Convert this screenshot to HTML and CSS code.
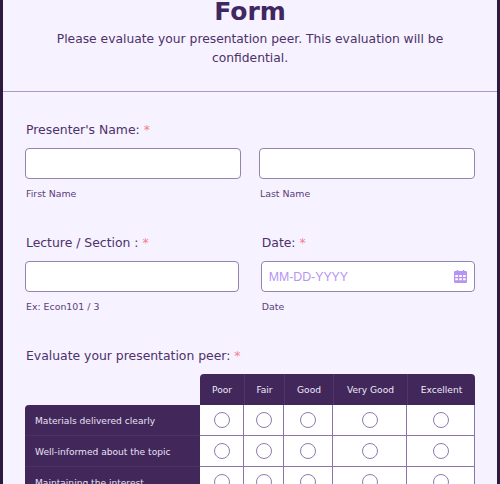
FILE: index.html
```html
<!DOCTYPE html>
<html>

<head>
    <meta charset="UTF-8">
    <meta name="viewport" content="width=device-width, initial-scale=1.0">
    <title>Peer Evaluation Form</title>
    <link rel="stylesheet" href="styles.css">
</head>

<body>
    <div class="form">
        <div class="form__header">
            <h1 class="form__title">Form</h1>
            <p class="form__description">Please evaluate your presentation peer. This evaluation will be confidential.</p>
        </div>

        <div class="form__body">
            <div class="field field--name">
                <div class="field__label">Presenter's Name: <span class="field__required">*</span></div>
                <div class="field__row field__row--name">
                    <div class="field__col">
                        <input type="text" class="input">
                        <div class="field__sublabel">First Name</div>
                    </div>
                    <div class="field__col">
                        <input type="text" class="input">
                        <div class="field__sublabel">Last Name</div>
                    </div>
                </div>
            </div>

            <div class="field__row field__row--split">
                <div class="field field--split">
                    <div class="field__label">Lecture / Section : <span class="field__required">*</span></div>
                    <input type="text" class="input">
                    <div class="field__sublabel">Ex: Econ101 / 3</div>
                </div>
                <div class="field field--split">
                    <div class="field__label">Date: <span class="field__required">*</span></div>
                    <div class="date">
                        <input type="text" class="input date__input" placeholder="MM-DD-YYYY">
                        <svg class="date__icon" viewBox="0 0 12 12" width="13" height="13">
                            <path fill="#b794f4" fill-rule="evenodd" d="M2.5 0h1.4v1h4.2V0h1.4v1H11a1 1 0 0 1 1 1v9a1 1 0 0 1-1 1H1a1 1 0 0 1-1-1V2a1 1 0 0 1 1-1h1.5zM1.2 4.6v1.8h2.4V4.6zm3.6 0v1.8h2.4V4.6zm3.6 0v1.8h2.4V4.6zM1.2 7.6v1.8h2.4V7.6zm3.6 0v1.8h2.4V7.6zm3.6 0v1.8h2.4V7.6z"/>
                        </svg>
                    </div>
                    <div class="field__sublabel">Date</div>
                </div>
            </div>

            <div class="field field--matrix">
                <div class="field__label">Evaluate your presentation peer: <span class="field__required">*</span></div>
                <table class="matrix">
                    <thead>
                        <tr>
                            <th class="matrix__corner"></th>
                            <th class="matrix__head matrix__col--poor">Poor</th>
                            <th class="matrix__head matrix__col--fair">Fair</th>
                            <th class="matrix__head matrix__col--good">Good</th>
                            <th class="matrix__head matrix__col--verygood">Very Good</th>
                            <th class="matrix__head matrix__col--excellent">Excellent</th>
                        </tr>
                    </thead>
                    <tbody>
                        <tr>
                            <th class="matrix__row">Materials delivered clearly</th>
                            <td class="matrix__cell"><span class="radio"></span></td>
                            <td class="matrix__cell"><span class="radio"></span></td>
                            <td class="matrix__cell"><span class="radio"></span></td>
                            <td class="matrix__cell"><span class="radio"></span></td>
                            <td class="matrix__cell"><span class="radio"></span></td>
                        </tr>
                        <tr>
                            <th class="matrix__row">Well-informed about the topic</th>
                            <td class="matrix__cell"><span class="radio"></span></td>
                            <td class="matrix__cell"><span class="radio"></span></td>
                            <td class="matrix__cell"><span class="radio"></span></td>
                            <td class="matrix__cell"><span class="radio"></span></td>
                            <td class="matrix__cell"><span class="radio"></span></td>
                        </tr>
                        <tr>
                            <th class="matrix__row">Maintaining the interest</th>
                            <td class="matrix__cell"><span class="radio"></span></td>
                            <td class="matrix__cell"><span class="radio"></span></td>
                            <td class="matrix__cell"><span class="radio"></span></td>
                            <td class="matrix__cell"><span class="radio"></span></td>
                            <td class="matrix__cell"><span class="radio"></span></td>
                        </tr>
                    </tbody>
                </table>
            </div>
        </div>
    </div>
</body>

</html>
```

FILE: styles.css
```css
*,
*::before,
*::after {
    box-sizing: border-box;
    margin: 0;
    padding: 0;
}

html,
body {
    height: 484px;
    overflow: hidden;
}

body {
    background-color: #2c1a3f;
    padding: 0 3px;
    font-family: "DejaVu Sans", Verdana, sans-serif;
    color: #4d3169;
}

.form {
    background-color: #f6f2ff;
    height: 100%;
}

.form__header {
    height: 92px;
    padding: 0 22px;
    text-align: center;
    border-bottom: 1px solid #a99bc9;
}

.form__title {
    font-size: 25px;
    line-height: 24px;
    font-weight: 700;
    color: #41275f;
}

.form__description {
    margin-top: 6px;
    font-size: 12.3px;
    line-height: 19px;
}

.form__body {
    padding: 29px 22px 0;
}

.field__label {
    padding-left: 1px;
    font-size: 12.4px;
    line-height: 18px;
    margin-bottom: 9px;
}

.field__required {
    color: #f2808a;
}

.field__row {
    display: flex;
}

.field__row--name {
    gap: 18px;
}

.field__row--split {
    gap: 21.5px;
    margin-top: 33px;
}

.field__col,
.field--split {
    flex: 1 1 0;
    min-width: 0;
}

.field__sublabel {
    margin-top: 8px;
    padding-left: 1px;
    font-size: 9.4px;
    line-height: 14px;
    color: #5a4078;
}

.input {
    display: block;
    width: 100%;
    height: 31px;
    border: 1px solid #9385ae;
    border-radius: 4px;
    background-color: white;
    outline: none;
}

.date {
    position: relative;
}

.date__input {
    padding: 0 7px;
    font-family: "Liberation Sans", Arial, sans-serif;
    font-size: 12.3px;
}

.date__input::placeholder {
    color: #b794f4;
    opacity: 1;
}

.date__icon {
    position: absolute;
    top: 9px;
    right: 8px;
}

.field--matrix {
    margin-top: 33px;
}

.matrix {
    width: 450px;
    border-collapse: separate;
    border-spacing: 0;
    table-layout: fixed;
    font-size: 9.1px;
}

.matrix__corner {
    width: 175px;
}

.matrix__head {
    height: 31px;
    font-weight: 400;
    color: #f0e9fb;
    background-color: #41275a;
    border-left: 1px solid #4f3569;
}

.matrix__head:nth-child(2) {
    border-left: none;
    border-top-left-radius: 4px;
}

.matrix__head:last-child {
    border-top-right-radius: 4px;
}

.matrix__col--poor {
    width: 44px;
}

.matrix__col--fair {
    width: 40px;
}

.matrix__col--good {
    width: 49px;
}

.matrix__col--verygood {
    width: 74px;
}

.matrix__col--excellent {
    width: 68px;
}

.matrix__row {
    height: 31px;
    padding-left: 10px;
    padding-top: 2px;
    font-weight: 400;
    text-align: left;
    white-space: nowrap;
    color: #e9e0f5;
    background-color: #41275a;
    border-bottom: 1px solid #4c3166;
}

tbody tr:first-child .matrix__row {
    border-top-left-radius: 4px;
}

.matrix__cell {
    text-align: center;
    vertical-align: middle;
    background-color: white;
    border-right: 1px solid #8a74ab;
    border-bottom: 1px solid #8a74ab;
}

.radio {
    display: block;
    width: 16px;
    height: 16px;
    margin: 0 auto;
    border: 1.5px solid #8f7ab0;
    border-radius: 50%;
}
```
